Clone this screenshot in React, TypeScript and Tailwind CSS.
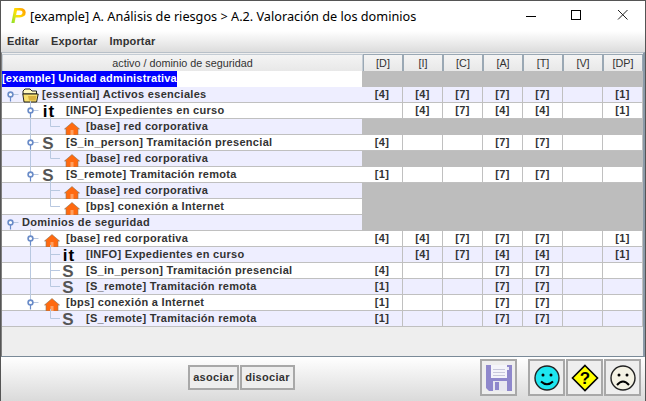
import React from "react";

const H = () => (
  <svg width="16" height="13" viewBox="0 0 16 13" className="shrink-0">
    <path d="M0.5 7 L8 0.5 L15.5 7 L14 7 L14 13 L2 13 L2 7 Z" fill="#ff6a10" stroke="#8a7a60" strokeWidth="0.6" />
    <rect x="6.5" y="8" width="3" height="5" fill="#ffa060" />
  </svg>
);
const Folder = () => (
  <svg width="17" height="15" viewBox="0 0 17 15" className="shrink-0">
    <path d="M1 3 L3 1 L8 1 L10 3 L14.5 3 L14.5 6 L1 6 Z" fill="#fff8c0" stroke="#111" strokeWidth="0.9" />
    <path d="M0.8 6 L16.2 6 L14.6 14 L2 14 Z" fill="#f8e070" stroke="#111" strokeWidth="0.9" />
    <path d="M6 8 L14.5 8 L13.5 12.5 L7 12.5 Z" fill="#d8b040" />
  </svg>
);
const It = () => <span className="font-['Liberation_Sans',sans-serif] font-bold text-[17px] leading-[14px] text-black tracking-[1px]">it</span>;
const S = () => <span className="font-['Liberation_Sans',sans-serif] font-bold text-[17px] leading-[14px] text-[#555555]">S</span>;

type R = { t: string; x: number; ix?: number; i?: "h" | "f" | "it" | "s"; v?: string[]; g?: boolean; sel?: boolean };
const E = "";
const rows: R[] = [
  { t: "[example] Unidad administrativa", x: 0, g: true, sel: true },
  { t: "[essential] Activos esenciales", x: 40, ix: 19, i: "f", v: ["[4]", "[4]", "[7]", "[7]", "[7]", E, "[1]"] },
  { t: "[INFO] Expedientes en curso", x: 64, ix: 38, i: "it", v: [E, "[4]", "[7]", "[4]", "[4]", E, "[1]"] },
  { t: "[base] red corporativa", x: 84, ix: 61, i: "h", g: true },
  { t: "[S_in_person] Tramitación presencial", x: 64, ix: 37, i: "s", v: ["[4]", E, E, "[7]", "[7]", E, E] },
  { t: "[base] red corporativa", x: 84, ix: 61, i: "h", g: true },
  { t: "[S_remote] Tramitación remota", x: 64, ix: 37, i: "s", v: ["[1]", E, E, "[7]", "[7]", E, E] },
  { t: "[base] red corporativa", x: 84, ix: 61, i: "h", g: true },
  { t: "[bps] conexión a Internet", x: 84, ix: 61, i: "h", g: true },
  { t: "Dominios de seguridad", x: 20, g: true },
  { t: "[base] red corporativa", x: 64, ix: 41, i: "h", v: ["[4]", "[4]", "[7]", "[7]", "[7]", E, "[1]"] },
  { t: "[INFO] Expedientes en curso", x: 84, ix: 58, i: "it", v: [E, "[4]", "[7]", "[4]", "[4]", E, "[1]"] },
  { t: "[S_in_person] Tramitación presencial", x: 84, ix: 57, i: "s", v: ["[4]", E, E, "[7]", "[7]", E, E] },
  { t: "[S_remote] Tramitación remota", x: 84, ix: 57, i: "s", v: ["[1]", E, E, "[7]", "[7]", E, E] },
  { t: "[bps] conexión a Internet", x: 64, ix: 41, i: "h", v: ["[1]", E, E, "[7]", "[7]", E, E] },
  { t: "[S_remote] Tramitación remota", x: 84, ix: 57, i: "s", v: ["[1]", E, E, "[7]", "[7]", E, E] },
];
const cols = ["[D]", "[I]", "[C]", "[A]", "[T]", "[V]", "[DP]"];

const Handle = ({ x, n }: { x: number; n: number }) => {
  const y = 16 * n + 7.5;
  return (
    <g>
      <line x1={x} x2={x + 8} y1={y} y2={y} stroke="#b8c8e0" />
      <line x1={x} x2={x} y1={y} y2={y + 7} stroke="#6a8cc8" strokeWidth="1.2" />
      <circle cx={x} cy={y} r="2.4" fill="#fff" stroke="#6a8cc8" strokeWidth="1.6" />
    </g>
  );
};

const Elbow = ({ from, to }: { from: number; to: number[] }) => (
  <g stroke="#b8c8e0">
    <line x1="48.5" x2="48.5" y1={16 * from + 14} y2={16 * to[to.length - 1] + 7.5} />
    {to.map((n) => (
      <line key={n} x1="48.5" x2="58" y1={16 * n + 7.5} y2={16 * n + 7.5} />
    ))}
  </g>
);

const Tree = () => (
  <svg className="absolute left-0 top-0 pointer-events-none" width="80" height="256" viewBox="0 0 80 256">
    <line x1="28.5" x2="28.5" y1="30" y2="103.5" stroke="#b8c8e0" />
    <line x1="28.5" x2="28.5" y1="158" y2="231.5" stroke="#b8c8e0" />
    <Elbow from={2} to={[3]} />
    <Elbow from={4} to={[5]} />
    <Elbow from={6} to={[7, 8]} />
    <Elbow from={10} to={[11, 12, 13]} />
    <Elbow from={14} to={[15]} />
    <Handle x={8.5} n={1} />
    <Handle x={28.5} n={2} />
    <Handle x={28.5} n={4} />
    <Handle x={28.5} n={6} />
    <Handle x={8.5} n={9} />
    <Handle x={28.5} n={10} />
    <Handle x={28.5} n={14} />
  </svg>
);

const Floppy = () => (
  <svg width="26" height="26" viewBox="0 0 26 26">
    <path d="M0 0 H26 V26 H3 L0 23 Z" fill="#8f88cc" />
    <rect x="5" y="0" width="16" height="13" fill="#f4f4fa" />
    <path d="M7 4.5 H19 M7 7.5 H19 M7 10.5 H19" stroke="#c8c8dc" />
    <rect x="21" y="2" width="2" height="3" fill="#e8e8f4" />
    <rect x="7" y="16" width="14" height="10" fill="#e8e8f0" />
    <rect x="9" y="17" width="4" height="8" fill="#8f88cc" />
  </svg>
);
const Smile = ({ sad }: { sad?: boolean }) => (
  <svg width="26" height="26" viewBox="0 0 26 26">
    <circle cx="13" cy="13" r="12" fill={sad ? "#f4f2e4" : "#1ee6f0"} stroke="#222" strokeWidth="1.4" />
    <circle cx="9" cy="10" r="1.5" fill="#000" />
    <circle cx="17" cy="10" r="1.5" fill="#000" />
    {sad ? <path d="M7 20 Q13 13 19 20" fill="none" stroke="#000" strokeWidth="2" /> : <path d="M7 16.5 Q13 22 19 16.5" fill="none" stroke="#000" strokeWidth="2" />}
  </svg>
);
const Help = () => (
  <svg width="28" height="28" viewBox="0 0 28 28">
    <path d="M14 1.5 L26.5 14 L14 26.5 L1.5 14 Z" fill="#ffff00" stroke="#000" strokeWidth="1.6" />
    <text x="14" y="20" textAnchor="middle" fontFamily="Liberation Sans" fontWeight="700" fontSize="17" fill="#000">?</text>
  </svg>
);

const ImgBtn = ({ children }: { children: React.ReactNode }) => (
  <div className="w-[37px] h-[37px] border-2 border-[#a8a8a8] bg-[#eeeeee] flex items-center justify-center">{children}</div>
);

export default function App() {
  return (
    <div className="w-[646px] h-[401px] bg-white overflow-hidden flex flex-col font-['Liberation_Sans',sans-serif] border-t border-[#555555] border-l border-r">
      <div className="h-[30px] shrink-0 bg-white flex items-center pl-[10px]">
        <span className="w-[15px] pr-[2px] text-[22px] leading-[24px] font-bold italic bg-gradient-to-bl from-[#ff7a00] via-[#ffe000] to-[#30e030] bg-clip-text text-transparent">P</span>
        <span className="ml-[4px] mt-[2px] text-[12.7px] text-black font-['Noto_Sans',sans-serif] whitespace-nowrap">[example] A. Análisis de riesgos &gt; A.2. Valoración de los dominios</span>
        <div className="ml-auto flex items-center">
          <svg width="46" height="30" viewBox="0 0 46 30"><line x1="19" x2="29" y1="15.5" y2="15.5" stroke="#000" /></svg>
          <svg width="46" height="30" viewBox="0 0 46 30"><rect x="18.5" y="9.5" width="9" height="9" fill="none" stroke="#000" /></svg>
          <svg width="46" height="30" viewBox="0 0 46 30"><path d="M19 9 L28.5 18.5 M28.5 9 L19 18.5" stroke="#222" /></svg>
        </div>
      </div>
      <div className="h-[21px] shrink-0 bg-gradient-to-b from-white to-[#dcdcdc] flex items-center gap-[12px] pl-[6px] text-[11px] tracking-[0.15px] font-bold text-[#333333]">
        <span>Editar</span>
        <span>Exportar</span>
        <span>Importar</span>
      </div>
      <div className="h-[305px] shrink-0 bg-[#eeeeee] border-y border-t-[#b8c0c8] border-b-[#7a8a98] border-l border-l-[#808080] border-r-2 border-r-[#8a9aa8] flex flex-col">
        <div className="grid grid-cols-[361px_repeat(7,40px)] h-[18px] w-[641px] shrink-0 pt-[1px] text-[10.8px] text-[#333333]">
          <div className="flex items-center justify-center border border-[#c4ccd4] bg-gradient-to-b from-[#f4f4f4] to-[#e8e8e8]">activo / dominio de seguridad</div>
          {cols.map((c) => (
            <div key={c} className="flex items-center justify-center border border-[#9aa8b4] bg-gradient-to-b from-[#f4f4f4] to-[#e8e8e8]">{c}</div>
          ))}
        </div>
        <div className="relative">
          {rows.map((r, n) => {
            const bg = n % 2 === 1 ? "bg-[#eeeeff]" : "bg-white";
            return (
              <div key={n} className="grid grid-cols-[360px_281px] h-[16px] text-[11px] leading-[14px] tracking-[0.3px] font-bold text-[#333333]">
                <div className={`${bg} border-b border-[#c0c0c0] flex items-start relative whitespace-nowrap`}>
                  {r.i && (
                    <span className="absolute flex justify-center w-[18px] items-center" style={{ left: r.ix, top: r.i === "h" ? 3 : r.i === "f" ? 1 : 2, height: r.i === "h" ? 13 : 14 }}>
                      {r.i === "h" ? <H /> : r.i === "f" ? <Folder /> : r.i === "it" ? <It /> : <S />}
                    </span>
                  )}
                  <span style={{ marginLeft: r.x }} className={r.sel ? "bg-[#0000ff] text-white h-[16px] leading-[14px] tracking-[0.18px]" : ""}>{r.t}</span>
                </div>
                {r.g ? (
                  <div className="bg-[#bdbdbd]" />
                ) : (
                  <div className="grid grid-cols-[41px_repeat(6,40px)]">
                    {r.v!.map((v, k) => (
                      <div key={k} className={`${bg} border-b border-r border-[#c0c0c0] flex items-start justify-center`}>{v}</div>
                    ))}
                  </div>
                )}
              </div>
            );
          })}
          <Tree />
        </div>
      </div>
      <div className="flex-1 bg-gradient-to-b from-white to-[#dadada] flex items-start pt-[2px]">
        <div className="ml-[187px] mt-[6px] flex gap-[1px] text-[11px] tracking-[0.3px] font-bold text-[#333333]">
          <div className="w-[51px] h-[25px] border-2 border-[#a8a8a8] bg-[#eeeeee] flex items-center justify-center">asociar</div>
          <div className="w-[55px] h-[25px] border-2 border-[#a8a8a8] bg-[#eeeeee] flex items-center justify-center">disociar</div>
        </div>
        <div className="ml-[185px] flex">
          <ImgBtn><Floppy /></ImgBtn>
        </div>
        <div className="ml-[11px] flex gap-[1px]">
          <ImgBtn><Smile /></ImgBtn>
          <ImgBtn><Help /></ImgBtn>
          <ImgBtn><Smile sad /></ImgBtn>
        </div>
      </div>
    </div>
  );
}
